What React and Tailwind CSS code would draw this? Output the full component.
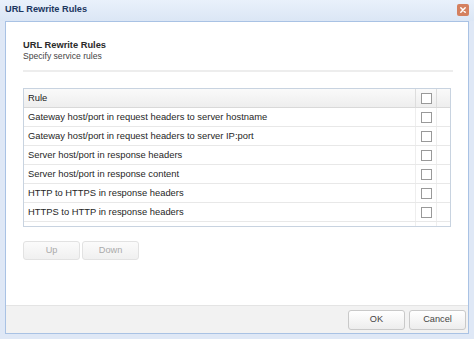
import React from 'react';

const rules = [
  'Gateway host/port in request headers to server hostname',
  'Gateway host/port in request headers to server IP:port',
  'Server host/port in response headers',
  'Server host/port in response content',
  'HTTP to HTTPS in response headers',
  'HTTPS to HTTP in response headers',
];

function Box() {
  return <div className="w-[11px] h-[11px] border border-[#999999] bg-white" />;
}

export default function App() {
  return (
    <div
      className="w-[474px] h-[339px] flex flex-col bg-[#dfe8f6] text-[9.4px] text-[#222]"
      style={{ fontFamily: '"Liberation Sans", Arial, sans-serif' }}
    >
      {/* title bar */}
      <div className="h-[21px] flex items-center justify-between pl-[5px] pr-[5px] bg-gradient-to-b from-[#e9f1fb] to-[#dbe6f5]">
        <span className="font-bold text-[#1b3660] text-[9.2px] -mt-[1px]">URL Rewrite Rules</span>
        <div className="w-[12px] h-[12px] rounded-[2px] bg-[#d4805f] flex items-center justify-center -mt-[1px]">
          <svg width="8" height="8" viewBox="0 0 8 8">
            <path d="M1.8 1.8 L6.2 6.2 M6.2 1.8 L1.8 6.2" stroke="#fff" strokeWidth="1.5" strokeLinecap="round" />
          </svg>
        </div>
      </div>

      {/* body panel */}
      <div className="mx-[5px] h-[313px] border border-[#a9c2e4] bg-white flex flex-col">
        <div className="flex-1 pl-[17px] pr-[17px] pt-[18px]">
          <div className="font-bold text-[9.3px] text-[#2a2a2a] leading-[11px]">URL Rewrite Rules</div>
          <div className="text-[8.6px] text-[#444] leading-[11px]">Specify service rules</div>
          <div className="h-[2px] bg-[#ededed] mt-[8px] -mr-[2px]" />

          {/* grid */}
          <div className="mt-[16px] border border-[#c8d3e0] h-[139px] flex flex-col">
            <div className="h-[19px] flex bg-gradient-to-b from-[#fafafa] to-[#eeeeee] border-b border-[#d9d9d9]">
              <div className="flex-1 pl-[4px] flex items-center text-[#1a1a1a]">Rule</div>
              <div className="w-[22px] border-l border-r border-[#dddddd] flex items-center justify-center">
                <Box />
              </div>
              <div className="w-[13px]" />
            </div>
            {rules.map((r) => (
              <div key={r} className="h-[19px] flex border-b border-[#e8e8e8]">
                <div className="flex-1 pl-[4px] flex items-center text-[#262626] whitespace-nowrap">{r}</div>
                <div className="w-[22px] border-l border-r border-[#eeeeee] flex items-center justify-center">
                  <Box />
                </div>
                <div className="w-[13px]" />
              </div>
            ))}
            <div className="flex-1 flex">
              <div className="flex-1" />
              <div className="w-[22px] border-l border-r border-[#eeeeee]" />
              <div className="w-[13px]" />
            </div>
          </div>

          <div className="flex gap-[2px] mt-[14px]">
            <button className="w-[57px] h-[19px] rounded-[3px] border border-[#e2e2e2] bg-gradient-to-b from-[#fbfbfb] to-[#f0f0f0] text-[#aaa] text-[9.2px]">Up</button>
            <button className="w-[57px] h-[19px] rounded-[3px] border border-[#e2e2e2] bg-gradient-to-b from-[#fbfbfb] to-[#f0f0f0] text-[#aaa] text-[9.2px]">Down</button>
          </div>
        </div>

        {/* footer */}
        <div className="h-[28px] border-t border-[#e4e4e4] bg-[#f2f2f2] flex items-center justify-end gap-[4px] pr-[2px]">
          <button className="w-[57px] h-[20px] rounded-[3px] border border-[#c9c9c9] bg-gradient-to-b from-[#ffffff] to-[#ededed] text-[#444] text-[9.2px]">OK</button>
          <button className="w-[57px] h-[20px] rounded-[3px] border border-[#c9c9c9] bg-gradient-to-b from-[#ffffff] to-[#ededed] text-[#444] text-[9.2px]">Cancel</button>
        </div>
      </div>
    </div>
  );
}
